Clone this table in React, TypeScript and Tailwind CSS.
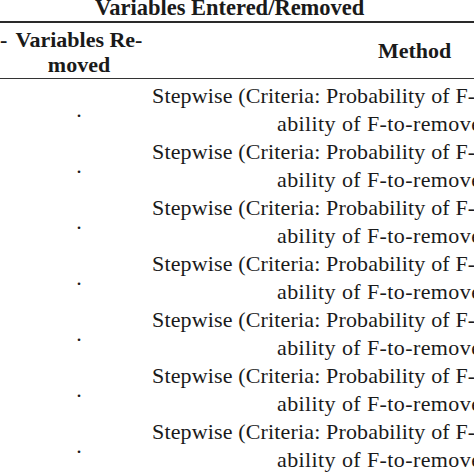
import React from 'react';

const rows = Array.from({ length: 7 });

export default function App() {
  return (
    <div className="w-[474px] h-[474px] overflow-hidden bg-white text-[#1a1a1a] font-['Liberation_Serif',serif]">
      <div className="-mt-[6px] h-[27px] pl-[95px] text-[22.5px] leading-[27px] font-bold whitespace-nowrap">
        Variables Entered/Removed
      </div>
      <div className="h-[2px] bg-[#2a2a2a]" />

      {/* header */}
      <div className="flex h-[56px] border-b border-[#333] font-bold text-[22px]">
        <div className="w-[12px] pt-[4px] leading-[25px]">-</div>
        <div className="w-[134px] pt-[4px] leading-[25px] text-center whitespace-nowrap">
          Variables Re-
          <br />
          moved
        </div>
        <div className="flex-1 flex items-center pl-[232px] whitespace-nowrap">Method</div>
      </div>

      <div className="pt-[3px]">
        {rows.map((_, i) => (
          <div key={i} className="flex h-[56px] text-[22px] leading-[28px] whitespace-nowrap">
            <div className="w-[12px]" />
            <div className="w-[134px] flex items-center justify-center">.</div>
            <div className="flex-1 overflow-hidden">
              <div className="pl-[6px] tracking-[0.15px]">Stepwise (Criteria: Probability of F-to-enter &lt;= .050, Prob-</div>
              <div className="pl-[131px] tracking-[0.4px]">ability of F-to-remove &gt;= .100).</div>
            </div>
          </div>
        ))}
      </div>
    </div>
  );
}
